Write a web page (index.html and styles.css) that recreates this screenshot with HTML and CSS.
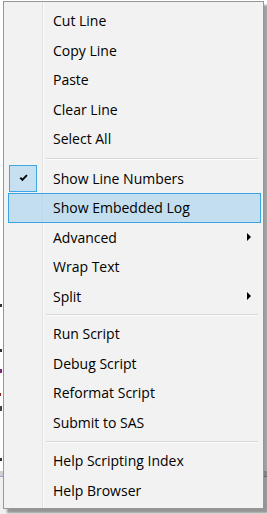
FILE: index.html
```html
<!DOCTYPE html>
<html lang="en">
<head>
  <meta charset="UTF-8">
  <title>Editor context menu</title>
  <link rel="stylesheet" href="styles.css">
</head>
<body>
  <div class="backdrop">
    <div class="code">
      <div class="mark mark-a"></div>
      <div class="mark mark-b"></div>
      <div class="mark mark-c"></div>
      <div class="mark mark-d"></div>
      <div class="mark mark-e"></div>
      <div class="mark mark-f"></div>
    </div>
    <div class="band"></div>
    <div class="rule"></div>
    <div class="status"></div>
  </div>

  <div class="menu">
    <ul class="group">
      <li class="item"><span class="icon"></span><span class="label">Cut Line</span></li>
      <li class="item"><span class="icon"></span><span class="label">Copy Line</span></li>
      <li class="item"><span class="icon"></span><span class="label">Paste</span></li>
      <li class="item"><span class="icon"></span><span class="label">Clear Line</span></li>
      <li class="item"><span class="icon"></span><span class="label">Select All</span></li>
    </ul>
    <div class="sep sep-wide"></div>
    <ul class="group">
      <li class="item">
        <span class="icon checked">
          <svg width="9" height="8" viewBox="0 0 9 8"><path d="M0.6 4.2 L2 2.9 L3.4 4.4 L7.3 0.4 L8.6 1.7 L3.4 7.3 Z" fill="#000"/></svg>
        </span>
        <span class="label">Show Line Numbers</span>
      </li>
      <li class="item active"><span class="icon"></span><span class="label">Show Embedded Log</span></li>
      <li class="item"><span class="icon"></span><span class="label">Advanced</span><span class="arrow"></span></li>
      <li class="item"><span class="icon"></span><span class="label">Wrap Text</span></li>
      <li class="item"><span class="icon"></span><span class="label">Split</span><span class="arrow"></span></li>
    </ul>
    <div class="sep sep-narrow"></div>
    <ul class="group">
      <li class="item"><span class="icon"></span><span class="label">Run Script</span></li>
      <li class="item"><span class="icon"></span><span class="label">Debug Script</span></li>
      <li class="item"><span class="icon"></span><span class="label">Reformat Script</span></li>
      <li class="item"><span class="icon"></span><span class="label">Submit to SAS</span></li>
    </ul>
    <div class="sep"></div>
    <ul class="group">
      <li class="item"><span class="icon"></span><span class="label">Help Scripting Index</span></li>
      <li class="item"><span class="icon"></span><span class="label">Help Browser</span></li>
    </ul>
  </div>
</body>
</html>
```
FILE: styles.css
```css
html, body {
  margin: 0;
  padding: 0;
}

body {
  width: 267px;
  height: 514px;
  position: relative;
  overflow: hidden;
  background-color: #f0f0f0;
  font-family: "Open Sans", "Noto Sans", Arial, sans-serif;
}

/* window behind the menu, only a sliver of it shows */
.backdrop {
  display: flex;
  flex-direction: column;
  height: 514px;
}

.code {
  flex: 1;
  background-color: #fff;
  display: flex;
  flex-direction: column;
}

.band {
  height: 5px;
  background-color: #d0d0d0;
}

.rule {
  height: 1px;
  background-color: #9aa3c6;
}

.status {
  height: 37px;
  background-color: #f0f0f0;
}

.mark {
  width: 2px;
  height: 3px;
  background-color: #333;
}

.mark-a { margin-top: 304px; }
.mark-b { margin-top: 42px; }
.mark-c { margin-top: 17px; background-color: #7a2a7a; height: 4px; }
.mark-d { margin-top: 20px; background-color: #8a2020; width: 1px; }
.mark-e { margin-top: 10px; background-color: #444; height: 5px; }
.mark-f { margin-top: 47px; }

/* the context menu lies over the editor */
.menu {
  position: absolute;
  left: 3px;
  top: 1px;
  width: 259px;
  padding: 4px 0 3px 0;
  background-color: #f2f2f2;
  background-image: linear-gradient(to right,
    transparent 38px, #e0e0e0 38px, #e0e0e0 39px,
    #fcfcfc 39px, #fcfcfc 40px, transparent 40px);
  border: 1px solid #979797;
  box-shadow: 4px 4px 2px rgba(0, 0, 0, 0.38);
  font-size: 14px;
  color: #000;
}

.group {
  list-style: none;
  margin: 0;
  padding: 0;
}

.item {
  display: flex;
  align-items: center;
  height: 29.5px;
  margin: 0 2px 0 4px;
  box-sizing: border-box;
  border: 1px solid transparent;
}

.item.active {
  background-color: rgba(179, 215, 238, 0.75);
  border-color: #3aa3e2;
}

.icon {
  display: flex;
  align-items: center;
  justify-content: center;
  box-sizing: border-box;
  width: 28px;
  height: 27px;
  margin-right: 16px;
  border: 1px solid transparent;
}

.icon.checked {
  background-color: #c6e0f1;
  border-color: #3da6e4;
}

.label {
  flex: 1;
  white-space: nowrap;
}

.arrow {
  width: 0;
  height: 0;
  margin-right: 9px;
  border-left: 4px solid #000;
  border-top: 4px solid transparent;
  border-bottom: 4px solid transparent;
}

.sep {
  height: 1px;
  margin: 4px 5px 3px 42px;
  background-color: #d7d7d7;
  border-bottom: 1px solid #fcfcfc;
}

.sep-wide {
  margin-bottom: 4px;
}

.sep-narrow {
  margin-top: 3px;
}
```
